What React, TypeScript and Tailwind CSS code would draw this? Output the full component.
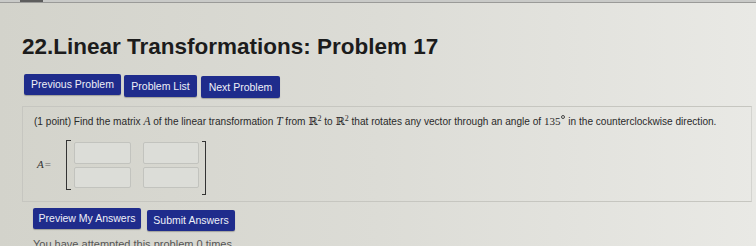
import React from "react";

const btn =
  "bg-[#1f2c8c] text-[#eef0f8] rounded-[2px] text-[10.5px] leading-none flex items-center justify-center shadow-[0_1px_1px_rgba(0,0,0,0.25)]";

const serif = { fontFamily: '"Liberation Serif", serif' };

export default function App() {
  return (
    <div
      className="w-[756px] h-[246px] overflow-hidden bg-gradient-to-r from-[#d3d3cb] via-[#dcdcd6] to-[#e9e9e5] relative"
      style={{ fontFamily: '"Liberation Sans", Arial, sans-serif' }}
    >
      <div className="h-[3px] border-b-[1.5px] border-[#9a9a98] bg-[#c9cac8] flex">
        <div className="ml-[20px] w-[23px] h-[2px] bg-[#5d5d5d]" />
      </div>
      <div className="pl-[22px] pt-[33px]">
        <h1 className="text-[22.5px] font-bold text-[#1c1c1c] leading-none h-[28px]">
          22.Linear Transformations: Problem 17
        </h1>
        <div className="flex gap-[3px] mt-[10px] ml-[2px]">
          <div className={btn + " w-[97px] h-[21px]"}>Previous Problem</div>
          <div className={btn + " w-[73px] h-[22px] mt-[1px]"}>Problem List</div>
          <div className={btn + " w-[79px] h-[22px] mt-[2px] ml-[1px]"}>Next Problem</div>
        </div>
        <div className="mt-[8px] w-[730px] h-[96px] border border-[#c6c6c0] border-r-[#d4d4d0] pl-[11px] pt-[9px]">
          <p className="text-[10.1px] text-[#2a2a2a] leading-none whitespace-nowrap">
            (1 point) Find the matrix{" "}
            <span className="italic text-[11.5px]" style={serif}>A</span> of the linear transformation{" "}
            <span className="italic text-[11.5px]" style={serif}>T</span> from{" "}
            <span className="text-[11px]" style={{ fontFamily: '"DejaVu Serif", serif' }}>ℝ</span>
            <sup className="text-[8px]" style={serif}>2</sup> to{" "}
            <span className="text-[11px]" style={{ fontFamily: '"DejaVu Serif", serif' }}>ℝ</span>
            <sup className="text-[8px]" style={serif}>2</sup> that rotates any vector through an angle of{" "}
            <span className="text-[11px]" style={serif}>135</span>
            <span className="inline-block w-[4px] h-[4px] rounded-full border border-[#444] align-top ml-[1px] mt-[-1px]" />{" "}
            in the counterclockwise direction.
          </p>
          <div className="flex items-center mt-[7px] ml-[3px]">
            <span className="italic text-[11px] text-[#333]" style={serif}>
              A
            </span>
            <span className="text-[11px] text-[#666] ml-[1px] mr-[15px]" style={serif}>
              =
            </span>
            <div className="w-[5px] h-[50px] border-l-[1.5px] border-t-[1.5px] border-b-[1.5px] border-[#333]" />
            <div className="grid grid-cols-[57px_56px] gap-x-[12px] gap-y-[3px] mx-[3px]">
              <div className="h-[22px] border border-[#c2c3be] bg-[#dcddd8] rounded-[2px]" />
              <div className="h-[22px] border border-[#c2c3be] bg-[#dcddd8] rounded-[2px]" />
              <div className="h-[21px] border border-[#c2c3be] bg-[#dcddd8] rounded-[2px]" />
              <div className="h-[21px] border border-[#c2c3be] bg-[#dcddd8] rounded-[2px]" />
            </div>
            <div className="w-[4px] h-[54px] mt-[6px] border-r-[1.5px] border-t-[1.5px] border-b-[1.5px] border-[#333]" />
          </div>
        </div>
        <div className="flex gap-[6px] mt-[6px] ml-[11px]">
          <div className={btn + " w-[108px] h-[21px]"}>Preview My Answers</div>
          <div className={btn + " w-[88px] h-[21px] mt-[2px]"}>Submit Answers</div>
        </div>
        <p className="mt-[8px] ml-[11px] text-[11px] text-[#555] leading-none">
          You have attempted this problem 0 times.
        </p>
      </div>
    </div>
  );
}
